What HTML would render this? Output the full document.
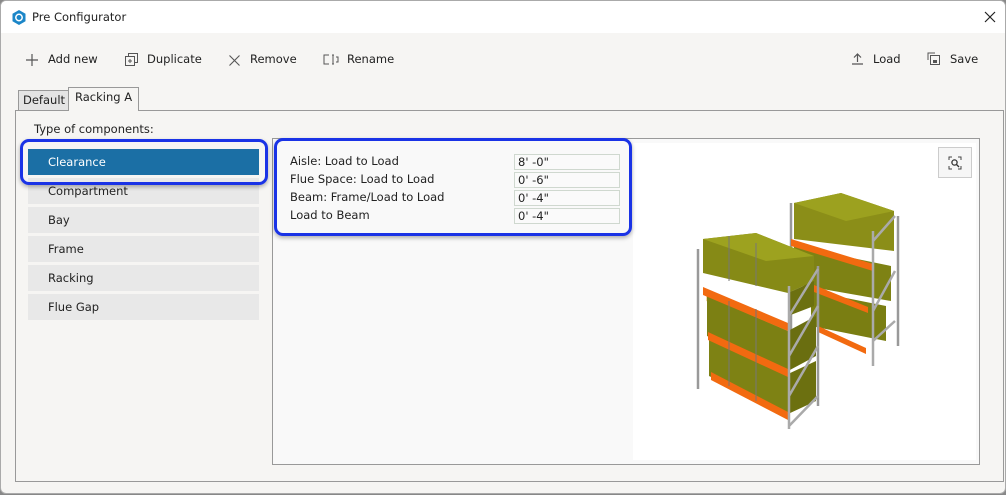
<!DOCTYPE html>
<html><head><style>
*{box-sizing:border-box;margin:0;padding:0}
body{width:1006px;height:495px;overflow:hidden;background:#888;font-family:"DejaVu Sans","Liberation Sans",sans-serif;font-size:11.5px;color:#222}
.win{position:absolute;left:0;top:0;width:1006px;height:494px;background:#f6f5f3;border:1px solid #aaa;border-radius:6px;overflow:hidden}
.title{position:absolute;left:0;top:0;width:1006px;height:32px;background:#fff}
.t{position:absolute;white-space:nowrap}
.tab{position:absolute;border:1px solid #999;border-bottom:none}
.item{position:absolute;left:27px;width:231px;height:26px;background:#e8e8e8;padding-left:20px;line-height:26px}
.hl{position:absolute;border:3px solid #1a33e6;border-radius:9px;box-shadow:0 2px 4px rgba(0,0,0,.3)}
.fld{position:absolute;left:513px;width:106px;height:16px;border:1px solid #cfd8cf;background:#fafafa;padding-left:3px;line-height:14px}
</style></head><body>
<div class="win">
<div class="title">
<svg style="position:absolute;left:11px;top:9px" width="14" height="15" viewBox="0 0 14 15"><path d="M7 0L13.5 3.7V11.3L7 15L0.5 11.3V3.7Z" fill="#1b86c8"/><circle cx="7" cy="7.5" r="3.2" fill="none" stroke="#fff" stroke-width="1.5"/></svg>
<div class="t" style="left:31px;top:9px">Pre Configurator</div>
<svg style="position:absolute;left:983px;top:10px" width="12" height="12"><path d="M1 1L11 11M11 1L1 11" stroke="#222" stroke-width="1.2"/></svg>
</div>
<svg style="position:absolute;left:25px;top:53px" width="12" height="12"><path d="M6 0V12M0 6H12" stroke="#555" stroke-width="1.2"/></svg>
<div class="t" style="left:47px;top:51px">Add new</div>
<svg style="position:absolute;left:124px;top:52px" width="13" height="13"><rect x="3.5" y="0.5" width="9" height="9" fill="none" stroke="#555"/><rect x="0.5" y="3.5" width="9" height="9" fill="#f6f5f3" stroke="#555"/><path d="M5 6V10M3 8H7" stroke="#555"/></svg>
<div class="t" style="left:146px;top:51px">Duplicate</div>
<svg style="position:absolute;left:228px;top:54px" width="11" height="11"><path d="M0.5 0.5L10.5 10.5M10.5 0.5L0.5 10.5" stroke="#555" stroke-width="1.1"/></svg>
<div class="t" style="left:249px;top:51px">Remove</div>
<svg style="position:absolute;left:322px;top:53px" width="16" height="11"><path d="M6 1H1V10H6M9 1H10V10H9M11 1H10M11 10H10M13 3H15V8H13" fill="none" stroke="#555"/></svg>
<div class="t" style="left:346px;top:51px">Rename</div>
<svg style="position:absolute;left:851px;top:52px" width="11" height="12"><path d="M5.5 9V1M2 4.5L5.5 1L9 4.5M0 11H11" fill="none" stroke="#555" stroke-width="1.2"/></svg>
<div class="t" style="left:872px;top:51px">Load</div>
<svg style="position:absolute;left:926px;top:51px" width="13" height="13"><path d="M1 8V1H8" fill="none" stroke="#555"/><rect x="3.5" y="3.5" width="9" height="9" fill="none" stroke="#555"/><rect x="6" y="8" width="4" height="3" fill="#555"/></svg>
<div class="t" style="left:949px;top:51px">Save</div>
<div class="tab" style="left:17px;top:89px;width:51px;height:20px;background:#e4e4e4"></div>
<div class="t" style="left:22px;top:92px">Default</div>
<div class="tab" style="left:67px;top:86px;width:71px;height:24px;background:#f6f5f3;z-index:2"></div>
<div class="t" style="left:74px;top:89px;z-index:3">Racking A</div>
<div style="position:absolute;left:14px;top:109px;width:989px;height:372px;border:1px solid #999"></div>
<div class="t" style="left:33px;top:121px">Type of components:</div>
<div class="item" style="top:148px;background:#1b6fa5;color:#fff">Clearance</div>
<div class="item" style="top:177px">Compartment</div>
<div class="item" style="top:206px">Bay</div>
<div class="item" style="top:235px">Frame</div>
<div class="item" style="top:264px">Racking</div>
<div class="item" style="top:293px">Flue Gap</div>
<div class="hl" style="left:19px;top:138px;width:248px;height:46px"></div>
<div style="position:absolute;left:271px;top:137px;width:708px;height:327px;border:1px solid #999;background:#f9f9f9"></div>
<div style="position:absolute;left:632px;top:142px;width:343px;height:317px;background:#fff"></div>
<div class="t" style="left:289px;top:153px">Aisle: Load to Load</div>
<div class="t" style="left:289px;top:171px">Flue Space: Load to Load</div>
<div class="t" style="left:289px;top:189px">Beam: Frame/Load to Load</div>
<div class="t" style="left:289px;top:207px">Load to Beam</div>
<div class="fld" style="top:153px">8' -0"</div>
<div class="fld" style="top:171px">0' -6"</div>
<div class="fld" style="top:189px">0' -4"</div>
<div class="fld" style="top:207px">0' -4"</div>
<div class="hl" style="left:273px;top:137px;width:358px;height:98px"></div>
<div style="position:absolute;left:937px;top:146px;width:34px;height:31px;border:1px solid #ccc;background:#f6f6f6"></div>
<svg style="position:absolute;left:947px;top:155px" width="14" height="14"><path d="M1 4V1H4M10 1H13V4M13 10V13H10M4 13H1V10" fill="none" stroke="#444"/><circle cx="6.5" cy="6.5" r="2.6" fill="none" stroke="#333" stroke-width="1.3"/><path d="M8.5 8.5L11 11" stroke="#333" stroke-width="1.3"/></svg>
<svg style="position:absolute;left:680px;top:180px" width="230" height="250" viewBox="0 0 230 250">
<!-- back rack -->
<g stroke="#999" stroke-width="2.5" fill="none"><path d="M110 22V185M217 35V165"/></g>
<polygon points="113,22 160,12 213,30 213,70 113,58" fill="#8b8e18"/>
<polygon points="113,22 160,12 213,30 165,40" fill="#9ca11f"/>
<polygon points="113,65 210,85 210,120 113,103" fill="#7e8214"/>
<polygon points="130,110 205,125 205,160 130,145" fill="#7a7e12"/>
<polygon points="110,58 192,83 192,90 110,65" fill="#f26a10"/>
<polygon points="133,104 187,126 187,132 133,111" fill="#f26a10"/>
<polygon points="137,145 185,167 185,173 137,151" fill="#f26a10"/>
<g stroke="#aaa" stroke-width="2.5" fill="none"><path d="M192 50V185M192 60L214 35M192 130L214 90M192 160L214 140"/></g>
<!-- front rack -->
<g stroke="#999" stroke-width="2.5" fill="none"><path d="M17 68V208M137 85V225"/></g>
<polygon points="22,58 75,52 133,75 133,100 107,112 22,92" fill="#868a16"/>
<polygon points="22,58 75,52 133,75 85,80" fill="#9da21f"/>
<polygon points="107,112 133,100 133,125 107,135" fill="#6c7010"/>
<polygon points="25,112 107,146 107,150 25,120" fill="#f4d6a6"/>
<polygon points="26,115 107,150 107,190 26,155" fill="#7c8013"/>
<polygon points="107,150 135,135 135,175 107,190" fill="#6a6e10"/>
<polygon points="28,158 107,193 107,233 28,195" fill="#7e8214"/>
<polygon points="107,193 135,180 135,220 107,233" fill="#6c7010"/>
<polygon points="22,106 107,142 107,150 22,114" fill="#f26a10"/>
<polygon points="27,151 107,188 107,196 27,159" fill="#f26a10"/>
<polygon points="30,191 107,231 107,239 30,199" fill="#f26a10"/>
<g stroke="#aaa" stroke-width="2.5" fill="none"><path d="M108 105V248M108 135L137 88M108 175L137 125M108 215L137 165M108 245L137 215"/></g>
<g stroke="#777" stroke-width="1" fill="none"><path d="M48 55V100M48 120V165M48 165V205M75 62V105M75 128V175M75 175V220"/></g>
</svg>
</div>
</body></html>
